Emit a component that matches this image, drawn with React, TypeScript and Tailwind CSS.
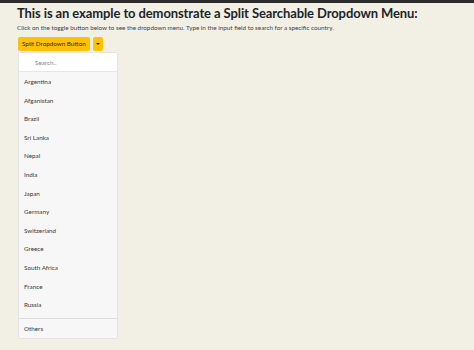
const countries = [
  "Argentina",
  "Afganistan",
  "Brazil",
  "Sri Lanka",
  "Nepal",
  "India",
  "Japan",
  "Germany",
  "Switzerland",
  "Greece",
  "South Africa",
  "France",
  "Russia",
];

const App = () => {
  return (
    <div className="w-[474px] h-[350px] overflow-hidden bg-[#f2efe5] font-['Lato',sans-serif] text-[#212529]">
      <div className="h-[3px] bg-[#2b2b2b]"></div>
      <div className="pl-[17px] pt-[2px]">
        <h1 className="text-[13px] leading-[16px] font-bold tracking-[-0.1px] whitespace-nowrap">
          This is an example to demonstrate a Split Searchable Dropdown Menu:
        </h1>
        <p className="text-[6.3px] leading-[9px] mt-[2px] text-[#444] whitespace-nowrap">
          Click on the toggle button below to see the dropdown menu. Type in the input field to search for a specific country.
        </p>
        <div className="flex gap-[3px] mt-[5px] ml-[1px]">
          <button className="h-[14px] px-[4px] bg-[#ffc107] rounded-[2px] text-[6.3px] leading-[14px] text-[#2a2a2a]">
            Split Dropdown Button
          </button>
          <button className="h-[14px] w-[10px] bg-[#ffc107] rounded-[2px] flex items-center justify-center">
            <span className="block w-0 h-0 border-l-[2px] border-r-[2px] border-t-[2px] border-l-transparent border-r-transparent border-t-[#212529]"></span>
          </button>
        </div>
        <div className="ml-[1px] w-[100px] mt-[1px] bg-[#f7f7f7] border border-[#e4e4e4] rounded-[2px]">
          <div className="h-[19px] bg-white border-b border-[#e6e6e6] pl-[16px] text-[6.3px] leading-[19px] text-[#888]">
            Search..
          </div>
          <div className="pt-[1px]">
            {countries.map((c) => (
              <div key={c} className="h-[18.6px] pl-[5px] text-[6.3px] leading-[18.6px] text-[#3a3a3a]">
                {c}
              </div>
            ))}
          </div>
          <div className="border-t border-[#dcdcdc] mt-[3px] h-[20px] pl-[5px] text-[6.3px] leading-[20px] text-[#3a3a3a]">
            Others
          </div>
        </div>
      </div>
    </div>
  );
};

export default App;
